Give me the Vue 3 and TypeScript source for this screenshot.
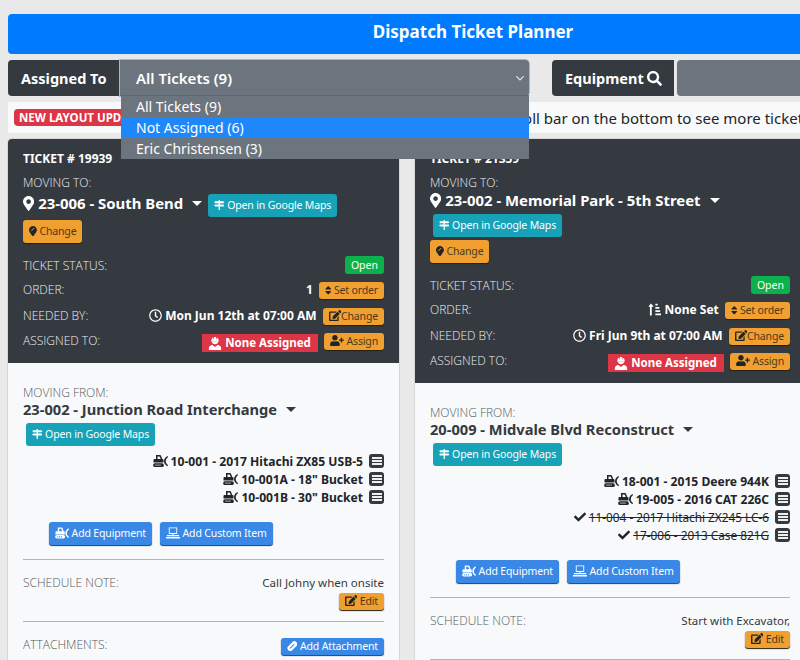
<script setup lang="ts">
const icons = {
  marker: { box: '0 0 384 512', d: 'M172.268 501.67C26.97 291.031 0 260.162 0 192 0 85.961 85.961 0 192 0s192 85.961 192 192c0 68.162-26.97 99.031-172.268 309.67-9.535 13.774-29.93 13.773-39.464 0zM192 272c44.183 0 80-35.817 80-80s-35.817-80-80-80-80 35.817-80 80 35.817 80 80 80z' },
  search: { box: '0 0 512 512', d: 'M505 442.7L405.3 343c-4.5-4.5-10.6-7-17-7H372c27.6-35.3 44-79.7 44-128C416 93.1 322.9 0 208 0S0 93.1 0 208s93.1 208 208 208c48.3 0 92.7-16.4 128-44v16.3c0 6.4 2.5 12.5 7 17l99.7 99.7c9.4 9.4 24.6 9.4 33.9 0l28.3-28.3c9.4-9.4 9.4-24.6.1-34zM208 336c-70.7 0-128-57.2-128-128 0-70.7 57.2-128 128-128 70.7 0 128 57.2 128 128 0 70.7-57.2 128-128 128z' },
  check: { box: '0 0 512 512', d: 'M173.898 439.404l-166.4-166.4c-9.997-9.997-9.997-26.206 0-36.204l36.203-36.204c9.997-9.998 26.207-9.998 36.204 0L192 312.69 432.095 72.596c9.997-9.997 26.207-9.997 36.204 0l36.203 36.204c9.997 9.997 9.997 26.206 0 36.204l-294.4 294.401c-9.998 9.997-26.207 9.997-36.204-.001z' },
  sort: { box: '0 0 320 512', d: 'M41 288h238c21.4 0 32.1 25.9 17 41L177 448c-9.4 9.4-24.6 9.4-33.9 0L24 329c-15.1-15.1-4.4-41 17-41zm255-105L177 64c-9.4-9.4-24.6-9.4-33.9 0L24 183c-15.1 15.1-4.4 41 17 41h238c21.4 0 32.1-25.9 17-41z' },
  clock: { box: '0 0 512 512', d: 'M256 8C119 8 8 119 8 256s111 248 248 248 248-111 248-248S393 8 256 8zm0 448c-110.5 0-200-89.5-200-200S145.5 56 256 56s200 89.5 200 200-89.5 200-200 200zm61.8-104.4l-84.9-61.7c-3.1-2.3-4.9-5.9-4.9-9.7V116c0-6.6 5.4-12 12-12h32c6.6 0 12 5.4 12 12v141.7l66.8 48.6c5.4 3.9 6.5 11.4 2.6 16.8L334.6 349c-3.9 5.3-11.4 6.5-16.8 2.6z' },
  edit: { box: '0 0 576 512', d: 'M402.6 83.2l90.2 90.2c3.8 3.8 3.8 10 0 13.8L274.4 405.6l-92.8 10.3c-12.4 1.4-22.9-9.1-21.5-21.5l10.3-92.8L388.8 83.2c3.8-3.8 10-3.8 13.8 0zm162-22.9l-48.8-48.8c-15.2-15.2-39.9-15.2-55.2 0l-35.4 35.4c-3.8 3.8-3.8 10 0 13.8l90.2 90.2c3.8 3.8 10 3.8 13.8 0l35.4-35.4c15.2-15.3 15.2-40 0-55.2zM384 346.2V448H64V128h229.8c3.2 0 6.2-1.3 8.5-3.5l40-40c7.6-7.6 2.2-20.5-8.5-20.5H48C21.5 64 0 85.5 0 112v352c0 26.5 21.5 48 48 48h352c26.5 0 48-21.5 48-48V306.2c0-10.7-12.9-16-20.5-8.5l-40 40c-2.2 2.3-3.5 5.3-3.5 8.5z' },
  userPlus: { box: '0 0 640 512', d: 'M624 208h-64v-64c0-8.8-7.2-16-16-16h-32c-8.8 0-16 7.2-16 16v64h-64c-8.8 0-16 7.2-16 16v32c0 8.8 7.2 16 16 16h64v64c0 8.8 7.2 16 16 16h32c8.8 0 16-7.2 16-16v-64h64c8.8 0 16-7.2 16-16v-32c0-8.8-7.2-16-16-16zm-400 48c70.7 0 128-57.3 128-128S294.7 0 224 0 96 57.3 96 128s57.3 128 128 128zm89.6 32h-16.7c-22.2 10.2-46.9 16-72.9 16s-50.6-5.8-72.9-16h-16.7C60.2 288 0 348.2 0 422.4V464c0 26.5 21.5 48 48 48h352c26.5 0 48-21.5 48-48v-41.6c0-74.2-60.2-134.4-134.4-134.4z' },
  signs: { box: '0 0 16 16', d: 'M7 0h2v2h5l2 1.5L14 5H9v2h6v3H9v6H7v-6H2L0 8.5 2 7h5V5H1V2h6z' },
  pinDot: { box: '0 0 384 512', d: 'M172.268 501.67C26.97 291.031 0 260.162 0 192 0 85.961 85.961 0 192 0s192 85.961 192 192c0 68.162-26.97 99.031-172.268 309.67-9.535 13.774-29.93 13.773-39.464 0zM120 260l150-150-30-20L100 230z' },
  hardhat: { box: '0 0 448 512', d: 'M224 300c-62 0-112-36-116-92h232c-4 56-54 92-116 92zM96 176v-28c0-46 24-80 64-94v62h24V44c10-8 70-8 80 0v72h24V54c40 14 64 48 64 94v28h16v22H80v-22zM128 330l96 70 96-70c70 8 128 60 128 118v64H0v-64c0-58 58-110 128-118z' },
  excavator: { box: '0 0 30 24', d: 'M6 0h8c1 0 1.7.5 2 1.3L18.5 8H19a2 2 0 012 2v5H1v-5a2 2 0 012-2h3zM9 3v5h6.5L13.2 3zM4 16.5h14a3.75 3.75 0 010 7.5H4a3.75 3.75 0 010-7.5zM5 19v2.5h2V19zm4 0v2.5h2V19zm4 0v2.5h2V19zM29 2l1 2.5c-3 2-4.5 5-4.500 8s1.500 5.500 4.500 7.500l-1 2.500c-4.500-2.500-7-6-7-10s2.500-8 7-10.500z' },
  custom: { box: '0 0 640 512', d: 'M128 0h384v296H128V0zm40 40v216h304V40H168zM296 296h48v56h-48zM40 352h560v52H40zM0 440h208v72H0zm216 0h208v72H216zm216 0h208v72H432z' },
  sortAmount: { box: '0 0 512 512', d: 'M304 32h64c9 0 16 7 16 16v32c0 9-7 16-16 16h-64c-9 0-16-7-16-16V48c0-9 7-16 16-16zm0 128h128c9 0 16 7 16 16v32c0 9-7 16-16 16H304c-9 0-16-7-16-16v-32c0-9 7-16 16-16zm0 128h160c9 0 16 7 16 16v32c0 9-7 16-16 16H304c-9 0-16-7-16-16v-32c0-9 7-16 16-16zm0 128h208v64H304c-9 0-16-7-16-16v-32c0-9 7-16 16-16zM120 16l96 108c6 8 1 20-10 20h-58v336c0 9-7 16-16 16H92c-9 0-16-7-16-16V144H34c-11 0-16-12-10-20z' },
  clip: { box: '0 0 512 512', d: 'M300 20c36-30 90-26 122 6l64 64c32 32 34 86 4 122L240 462c-44 44-116 44-160 0l-30-30c-44-44-44-116 0-160L260 60zM318 150L140 328c-10 10-10 26 0 36s26 10 36 0l178-178c10-10 10-26 0-36s-26-10-36 0z' }
} as const

type IconName = keyof typeof icons

interface Gear {
  label: string
  done?: boolean
}

interface Ticket {
  no: string
  dest: string
  order: string
  needed: string
  from: string
  gear: Gear[]
  note: string
}

const tickets: Ticket[] = [
  {
    no: '19939',
    dest: '23-006 - South Bend',
    order: '1',
    needed: 'Mon Jun 12th at 07:00 AM',
    from: '23-002 - Junction Road Interchange',
    gear: [
      { label: '10-001 - 2017 Hitachi ZX85 USB-5' },
      { label: '10-001A - 18" Bucket' },
      { label: '10-001B - 30" Bucket' }
    ],
    note: 'Call Johny when onsite'
  },
  {
    no: '21359',
    dest: '23-002 - Memorial Park - 5th Street',
    order: 'None Set',
    needed: 'Fri Jun 9th at 07:00 AM',
    from: '20-009 - Midvale Blvd Reconstruct',
    gear: [
      { label: '18-001 - 2015 Deere 944K' },
      { label: '19-005 - 2016 CAT 226C' },
      { label: '11-004 - 2017 Hitachi ZX245 LC-6', done: true },
      { label: '17-006 - 2013 Case 821G', done: true }
    ],
    note: 'Start with Excavator,'
  }
]

const options = ['All Tickets (9)', 'Not Assigned (6)', 'Eric Christensen (3)']

const box = (n: IconName) => icons[n].box
const path = (n: IconName) => icons[n].d
</script>

<template>
  <div class="page">
    <h1 class="title">Dispatch Ticket Planner</h1>

    <div class="filters">
      <div class="group assigned">
        <span class="addon">Assigned To</span>
        <div class="select">
          <span>All Tickets (9)</span>
          <svg class="chevron" viewBox="0 0 16 16"><path d="M3 5.5l5 5 5-5" /></svg>
          <ul class="menu">
            <li v-for="(o, i) in options" :key="o" :class="{ on: i === 1 }">{{ o }}</li>
          </ul>
        </div>
      </div>
      <div class="group equipment">
        <span class="addon">Equipment <svg class="ic" :viewBox="box('search')"><path :d="path('search')" /></svg></span>
        <div class="search-input"></div>
      </div>
    </div>

    <div class="notice">
      <span class="badge-new">NEW LAYOUT UPDATE</span>
      <span class="notice-text">Use the scroll bar on the bottom to see more tickets</span>
    </div>

    <div class="tickets">
      <article v-for="t in tickets" :key="t.no" class="ticket">
        <header class="dark">
          <div class="no">TICKET # {{ t.no }}</div>
          <div class="lbl">MOVING TO:</div>
          <div class="dest-wrap">
            <svg class="ic pin" :viewBox="box('marker')"><path :d="path('marker')" /></svg>
            <span class="dest">{{ t.dest }}</span><i class="caret dest-caret"></i>
            <button class="btn teal"><svg class="ic" :viewBox="box('signs')"><path :d="path('signs')" /></svg> Open in Google Maps</button>
          </div>
          <button class="btn amber change"><svg class="ic narrow" :viewBox="box('pinDot')"><path :d="path('pinDot')" /></svg> Change</button>

          <div class="row status">
            <span class="lbl">TICKET STATUS:</span>
            <span class="open">Open</span>
          </div>
          <div class="row order">
            <span class="lbl">ORDER:</span>
            <span class="val">
              <b>
                <svg v-if="t.order === 'None Set'" class="ic" :viewBox="box('sortAmount')"><path :d="path('sortAmount')" /></svg>
                {{ t.order }}
              </b>
              <button class="btn amber"><svg class="ic slim" :viewBox="box('sort')"><path :d="path('sort')" /></svg> Set order</button>
            </span>
          </div>
          <div class="row needed">
            <span class="lbl">NEEDED BY:</span>
            <span class="val">
              <b><svg class="ic" :viewBox="box('clock')"><path :d="path('clock')" /></svg> {{ t.needed }}</b>
              <button class="btn amber"><svg class="ic wide" :viewBox="box('edit')"><path :d="path('edit')" /></svg>Change</button>
            </span>
          </div>
          <div class="row">
            <span class="lbl">ASSIGNED TO:</span>
            <span class="val">
              <span class="none"><svg class="ic" :viewBox="box('hardhat')"><path :d="path('hardhat')" /></svg> None Assigned</span>
              <button class="btn amber"><svg class="ic wider" :viewBox="box('userPlus')"><path :d="path('userPlus')" /></svg> Assign</button>
            </span>
          </div>
        </header>

        <div class="light">
          <div class="lbl from-lbl">MOVING FROM:</div>
          <div class="from">{{ t.from }}<i class="caret"></i></div>
          <button class="btn teal maps"><svg class="ic" :viewBox="box('signs')"><path :d="path('signs')" /></svg> Open in Google Maps</button>

          <ul class="gear">
            <li v-for="g in t.gear" :key="g.label">
              <svg v-if="g.done" class="ic tick" :viewBox="box('check')"><path :d="path('check')" /></svg>
              <svg v-else class="ic digger" :viewBox="box('excavator')"><path :d="path('excavator')" /></svg>
              <span :class="g.done ? 'struck' : 'bold'">{{ g.label }}</span>
              <span class="burger"><i></i><i></i><i></i></span>
            </li>
          </ul>

          <div class="adds">
            <button class="btn blue"><svg class="ic" :viewBox="box('excavator')"><path :d="path('excavator')" /></svg> Add Equipment</button>
            <button class="btn blue"><svg class="ic" :viewBox="box('custom')"><path :d="path('custom')" /></svg> Add Custom Item</button>
          </div>

          <hr />
          <div class="note">
            <span class="lbl">SCHEDULE NOTE:</span>
            <div class="note-body">
              <div>{{ t.note }}</div>
              <button class="btn amber edit"><svg class="ic wide" :viewBox="box('edit')"><path :d="path('edit')" /></svg> Edit</button>
            </div>
          </div>
          <hr />
          <div class="attach">
            <span class="lbl">ATTACHMENTS:</span>
            <button class="btn blue add-file"><svg class="ic" :viewBox="box('clip')"><path :d="path('clip')" /></svg> Add Attachment</button>
          </div>
        </div>
      </article>
    </div>
  </div>
</template>

<style>
body {
  background: #e9e9e9;
}
</style>

<style scoped>
.page {
  width: 800px;
  height: 660px;
  overflow: hidden;
  padding: 14px 0 0 8px;
  box-sizing: border-box;
  font-family: 'Noto Sans', 'Open Sans', sans-serif;
  color: #212529;
}

.ic {
  display: inline-block;
  flex: none;
  width: 1em;
  height: 1em;
  vertical-align: -0.125em;
  fill: currentColor;
  fill-rule: evenodd;
}

.title {
  margin: 0;
  width: 930px;
  height: 40px;
  line-height: 35px;
  background: #007bff;
  color: #fff;
  border-radius: 4px 0 0 4px;
  font-size: 17px;
  font-weight: 700;
  text-align: center;
}

.filters {
  display: flex;
  margin-top: 6px;
  height: 36px;
  width: 900px;
  position: relative;
  z-index: 2;
}

.group {
  display: flex;
}

.addon {
  display: flex;
  align-items: center;
  gap: 4px;
  background: #343a40;
  color: #fff;
  font-size: 14.5px;
  font-weight: 700;
  padding: 0 13px;
  border-radius: 4px 0 0 4px;
  box-sizing: border-box;
  white-space: nowrap;
}

.assigned .addon {
  width: 111px;
}

.select {
  position: relative;
  width: 409px;
  margin-left: 1px;
  background: #6c757d;
  color: #fff;
  border-radius: 0 4px 4px 0;
  box-shadow: 0 0 0 1px #9dbcdc;
  font-size: 15px;
  font-weight: 600;
  line-height: 37px;
  padding-left: 16px;
  box-sizing: border-box;
}

.chevron {
  position: absolute;
  right: 3px;
  top: 12px;
  width: 12px;
  height: 12px;
  fill: none;
  stroke: #e6e6e6;
  stroke-width: 1.5;
}

.menu {
  position: absolute;
  left: 1px;
  right: 0;
  top: 35px;
  margin: 0;
  padding: 0;
  list-style: none;
  height: 63px;
  overflow: hidden;
  background: #6c757d;
  font-size: 14px;
  font-weight: 400;
  line-height: 21px;
  border-top: 1px solid #5f676e;
}

.menu li {
  padding-left: 15px;
  height: 21px;
  white-space: nowrap;
}

.menu li.on {
  background: #1e88fb;
}

.equipment {
  margin-left: 23px;
}

.equipment .addon {
  width: 122px;
  padding: 0 13px;
}

.equipment .ic {
  width: 15px;
  height: 15px;
  margin-left: -1px;
}

.search-input {
  width: 200px;
  margin-left: 3px;
  background: #6c757d;
  border-radius: 4px;
}

.notice {
  display: flex;
  align-items: center;
  height: 31px;
  margin-top: 6px;
  padding-left: 6px;
  background: #f8f9fa;
  font-size: 15px;
  white-space: nowrap;
}

.notice-text {
  margin-left: 299px;
}

.badge-new {
  background: #dc3545;
  color: #fff;
  font-size: 11.5px;
  font-weight: 700;
  padding: 1px 5px;
  border-radius: 4px;
}

.tickets {
  display: flex;
  gap: 15px;
  margin-top: 6px;
  width: 900px;
}

.ticket {
  width: 391px;
  flex: none;
  border-radius: 4px 4px 0 0;
  overflow: hidden;
  background: #f8f9fa;
  box-shadow: 0 0 0 1px #d6d6d6;
}

.ticket + .ticket {
  width: 390px;
  margin-left: 1px;
}

.dark {
  background: #343a40;
  color: #fff;
  padding: 12px 15px 13px;
}

.no {
  font-size: 12px;
  font-weight: 700;
  line-height: 16px;
}

.lbl {
  font-family: 'Open Sans', sans-serif;
  font-size: 12px;
  font-weight: 300;
  line-height: 18px;
  white-space: nowrap;
}

.dark .lbl {
  color: #eceef0;
}

.light .lbl {
  color: #555c63;
}

.dark > .lbl {
  margin-top: 8px;
  line-height: 15px;
}

.dest-wrap {
  font-size: 14.9px;
  line-height: 20px;
}

.dest {
  font-weight: 700;
}

.pin {
  width: 0.75em;
  margin-right: 4px;
}

.caret {
  display: inline-block;
  margin-left: 9px;
  vertical-align: 3px;
  border-left: 5px solid transparent;
  border-right: 5px solid transparent;
  border-top: 5px solid currentColor;
}

.dest-caret {
  margin-right: 3px;
}

.btn {
  display: inline-block;
  border: 0;
  border-radius: 3px;
  font-family: inherit;
  font-size: 10.5px;
  letter-spacing: -0.15px;
  line-height: 17px;
  padding: 0 6px;
  white-space: nowrap;
}

.teal {
  background: #17a2b8;
  color: #fff;
  height: 23px;
  line-height: 23px;
  padding: 0 6px;
  margin: 4px 0 0 3px;
}

.maps {
  display: block;
  margin: 5px 0 0 3px;
}

.amber {
  background: #f0a030;
  color: #4a3a1e;
  box-shadow: 0 1px 1px #2a2008;
  height: 17px;
}

.amber .ic {
  color: #212529;
}

.amber .narrow {
  width: 0.75em;
}

.amber .slim {
  width: 0.625em;
}

.amber .wide {
  width: 12.5px;
  height: 11px;
}

.amber .wider {
  width: 14px;
  height: 11px;
}

.change {
  display: block;
  height: 23px;
  line-height: 23px;
  margin-top: 3px;
  padding: 0 6px;
}

.row {
  display: flex;
  justify-content: space-between;
  align-items: flex-start;
  margin-top: 7px;
  height: 18px;
}

.status {
  margin-top: 14px;
}

.order {
  margin-top: 6px;
}

.needed {
  margin-top: 8px;
}

.val {
  display: flex;
  align-items: flex-start;
  gap: 6px;
}

.val .btn {
  margin-top: 1px;
}

.val b {
  font-size: 12px;
  font-weight: 700;
  line-height: 18px;
  white-space: nowrap;
}

.val b .ic {
  width: 13px;
  height: 13px;
}

.open {
  background: #0db14b;
  color: #fff;
  font-size: 10.5px;
  line-height: 18px;
  padding: 0 6px;
  margin-top: -1px;
  border-radius: 3px;
}

.none {
  background: #dc3545;
  color: #fff;
  font-size: 11.5px;
  font-weight: 700;
  line-height: 18px;
  margin-top: 2px;
  padding: 0 7px 0 6px;
  white-space: nowrap;
}

.none .ic {
  width: 14px;
  height: 14px;
  vertical-align: -3px;
}

.light {
  padding: 23px 15px 0;
}

.light .from-lbl {
  line-height: 14px;
}

.from {
  font-size: 14.65px;
  font-weight: 700;
  color: #343a40;
  line-height: 18px;
}

.gear {
  list-style: none;
  margin: 6px 0 0;
  padding: 0;
}

.gear li {
  display: flex;
  justify-content: flex-end;
  align-items: center;
  gap: 3px;
  height: 18px;
  font-size: 12.1px;
}

.bold {
  font-weight: 700;
  color: #212529;
}

.struck {
  font-size: 11.8px;
  text-decoration: line-through;
}

.digger {
  width: 15px;
  height: 12px;
}

.tick {
  width: 12px;
  height: 12px;
}

.burger {
  width: 15px;
  height: 14px;
  margin-left: 3px;
  background: #343a40;
  border-radius: 3px;
  display: flex;
  flex-direction: column;
  justify-content: center;
  align-items: center;
  gap: 1px;
}

.burger i {
  display: block;
  width: 10px;
  height: 2px;
  background: #eee;
}

.adds {
  display: flex;
  gap: 8px;
  margin: 16px 0 14px 26px;
}

.blue {
  background: #3a88e5;
  color: #fff;
  height: 23px;
  line-height: 23px;
  padding: 0 6px;
  box-shadow: 0 1px 1px #123d70;
}

.adds .ic {
  width: 14px;
  height: 12px;
  vertical-align: -2px;
}

.add-file {
  height: 17px;
  line-height: 17px;
  margin-top: 2px;
}

hr {
  border: 0;
  border-top: 1px solid #b0b4b8;
  margin: 11px 0 14px;
}

.note {
  display: flex;
  justify-content: space-between;
}

.note-body {
  text-align: right;
  font-size: 11.5px;
  line-height: 18px;
  color: #343a40;
}

.edit {
  margin-top: 1px;
  padding: 0 6px;
}

.attach {
  display: flex;
  justify-content: space-between;
  align-items: flex-start;
}
</style>
